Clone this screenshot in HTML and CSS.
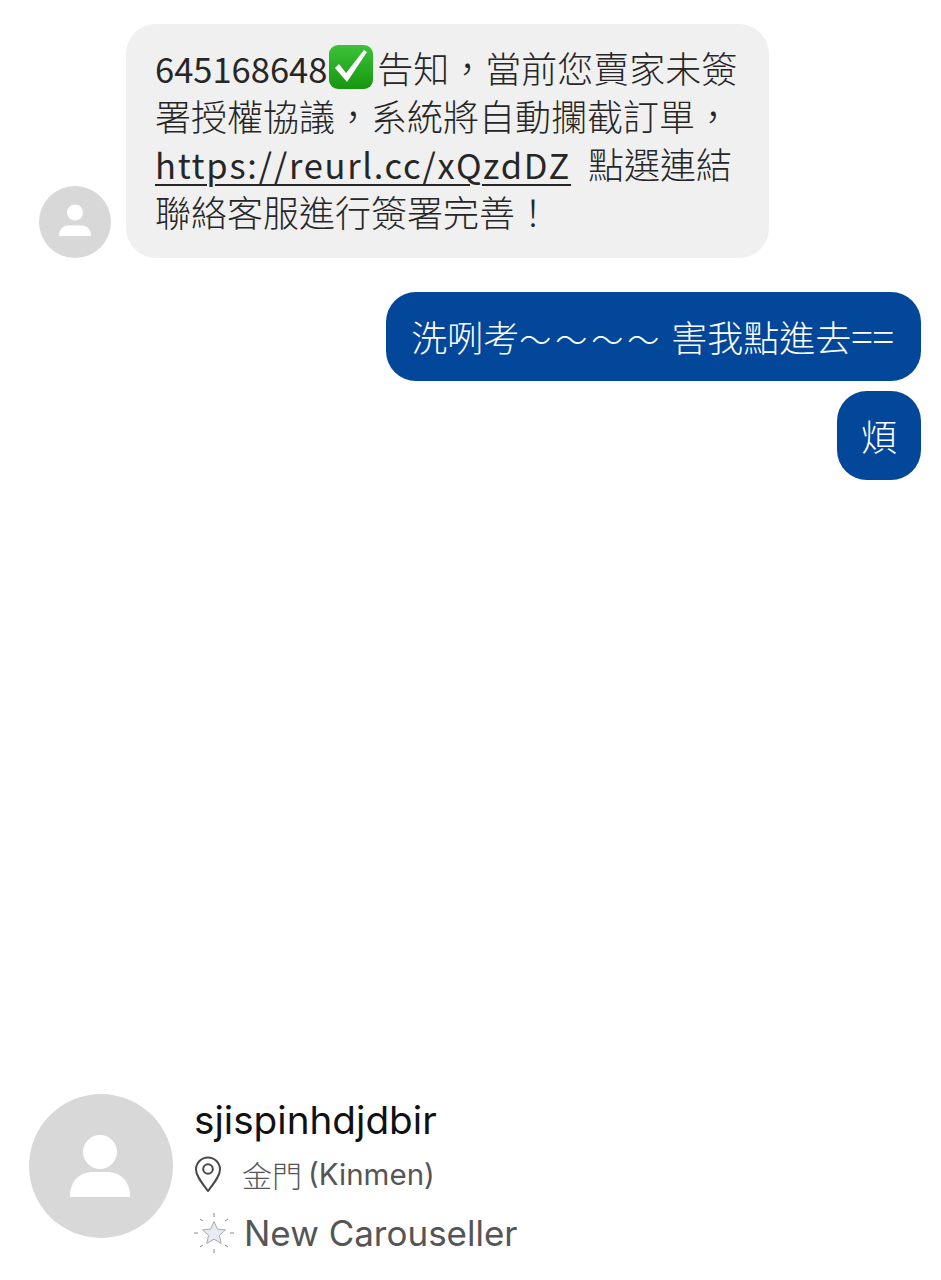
FILE: index.html
```html
<!DOCTYPE html>
<html lang="zh-Hant">
<head>
    <meta charset="UTF-8">
    <title>Chat</title>
    <link rel="stylesheet" href="styles.css">
</head>
<body>
    <div class="page">
        <div class="chat">
            <div class="row-in">
                <div class="avatar-small">
                    <svg viewBox="0 0 72 72" width="72" height="72"><circle cx="36" cy="26.5" r="8" fill="#fff"/><path d="M20 50c0-8 5-10.500 10-10.500h12c5 0 10 2.500 10 10.500z" fill="#fff"/></svg>
                </div>
                <div class="bubble-in">
                    <span class="latin">645168648</span><svg class="check" viewBox="0 0 46 46" width="46" height="46"><defs><linearGradient id="tick" x1="0" y1="0" x2="0" y2="1"><stop offset="0" stop-color="#3cc23a"/><stop offset="1" stop-color="#17960f"/></linearGradient></defs><rect x="1" y="1" width="44" height="44" rx="9" fill="url(#tick)"/><path d="M7 24l4-4 7 9L36 6l3 2-20 30z" fill="#fff"/></svg>告知，當前您賣家未簽署授權協議，系統將自動攔截訂單，<a class="latin link">https://reurl.cc/xQzdDZ</a>&nbsp;點選連結聯絡客服進行簽署完善！
                </div>
            </div>
            <div class="bubble-out">洗咧考<span class="wave">～～～～</span> 害我點進去<span class="latin">==</span></div>
            <div class="bubble-out short">煩</div>
        </div>

        <div class="profile">
            <div class="avatar-big">
                <svg viewBox="0 0 144 144" width="144" height="144"><circle cx="71" cy="58" r="17" fill="#fff"/><path d="M41 103c0-17 10-25 24-25h12c14 0 24 8 24 25z" fill="#fff"/></svg>
            </div>
            <div class="info">
                <div class="name">sjispinhdjdbir</div>
                <div class="location">
                    <svg class="pin" viewBox="0 0 28 36" width="28" height="36"><path d="M14 35C8 27 2 20 2 13.500a12 12 0 0 1 24 0C26 20 20 27 14 35z" fill="none" stroke="#4a4a4a" stroke-width="2"/><circle cx="14" cy="13" r="4.800" fill="none" stroke="#4a4a4a" stroke-width="2"/></svg>
                    <span>金門</span><span class="city">(Kinmen)</span>
                </div>
                <div class="badge">
                    <svg class="star" viewBox="0 0 42 42" width="42" height="42">
                        <path d="M21 9.500l3.400 7.600 8.100.8-6.100 5.400 1.800 8.100-7.200-4.200-7.200 4.200 1.800-8.100-6.100-5.400 8.100-.8z" fill="#e6ebf6" stroke="#a9a9a9" stroke-width="1"/>
                        <path d="M21 1v4M21 37v4M1 21h4M37 21h4M7 7l3 2M35 7l-3 2M7 35l3-2M35 35l-3-2" stroke="#8a8a8a" stroke-width="1" fill="none"/>
                    </svg>
                    <span>New Carouseller</span>
                </div>
            </div>
        </div>
    </div>
</body>
</html>
```

FILE: styles.css
```css
body {
    margin: 0;
    background: #fff;
    font-family: "Noto Sans CJK TC", "Noto Sans", sans-serif;
}

.page {
    height: 1280px;
    display: flex;
    flex-direction: column;
    overflow: hidden;
}

.chat {
    padding: 24px 20px 0 39px;
    display: flex;
    flex-direction: column;
    align-items: flex-end;
    gap: 10px;
}

.row-in {
    align-self: flex-start;
    display: flex;
    align-items: flex-end;
    gap: 15px;
    margin-bottom: 24px;
}

.avatar-small {
    width: 72px;
    height: 72px;
    border-radius: 50%;
    background: #d8d8d8;
    flex-shrink: 0;
}

.avatar-small svg,
.avatar-big svg {
    display: block;
}

.bubble-in {
    box-sizing: border-box;
    width: 643px;
    height: 234px;
    padding: 19px 29px;
    background: #f0f0f0;
    border-radius: 30px;
    color: #262626;
    font-size: 36px;
    font-weight: 300;
    line-height: 48px;
}

.latin {
    font-family: "Noto Sans CJK TC", "Noto Sans", sans-serif;
    font-size: 34.5px;
    font-weight: 400;
    line-height: 0;
}

.link {
    margin-right: 9px;
    letter-spacing: 1.7px;
    text-decoration: underline;
    text-decoration-thickness: 2px;
    text-underline-offset: 5px;
}

.check {
    vertical-align: 3px;
    margin: -10px 3px -10px 1px;
}

.bubble-out {
    box-sizing: border-box;
    height: 89px;
    padding: 0 27px 0 25px;
    background: #03479a;
    border-radius: 30px;
    color: #fff;
    font-size: 36px;
    font-weight: 300;
    line-height: 89px;
    white-space: nowrap;
}

.bubble-out.short {
    padding: 0 24px;
}

.wave {
    font-size: 32px;
    letter-spacing: 4px;
    line-height: 0;
}

.bubble-out .latin {
    font-size: 40px;
    font-weight: 300;
}

.profile {
    margin-top: auto;
    padding: 0 0 15px 29px;
    display: flex;
    align-items: flex-start;
    gap: 21px;
}

.avatar-big {
    width: 144px;
    height: 144px;
    border-radius: 50%;
    background: #d8d8d8;
    flex-shrink: 0;
}

.info {
    display: flex;
    flex-direction: column;
}

.name {
    font-family: "Inter", "Noto Sans", sans-serif;
    font-size: 38.700px;
    line-height: 52px;
    color: #111;
}

.location {
    display: flex;
    align-items: center;
    height: 55px;
    font-size: 30px;
    font-weight: 300;
    color: #555;
}

.pin {
    margin-right: 20px;
}

.city {
    font-family: "Inter", "Noto Sans", sans-serif;
    font-size: 29.500px;
    margin-left: 6px;
    font-weight: 400;
}

.badge {
    display: flex;
    align-items: center;
    gap: 9px;
    height: 64px;
    margin-left: -1px;
    font-family: "Inter", "Noto Sans", sans-serif;
    font-size: 35px;
    color: #555;
}
```
